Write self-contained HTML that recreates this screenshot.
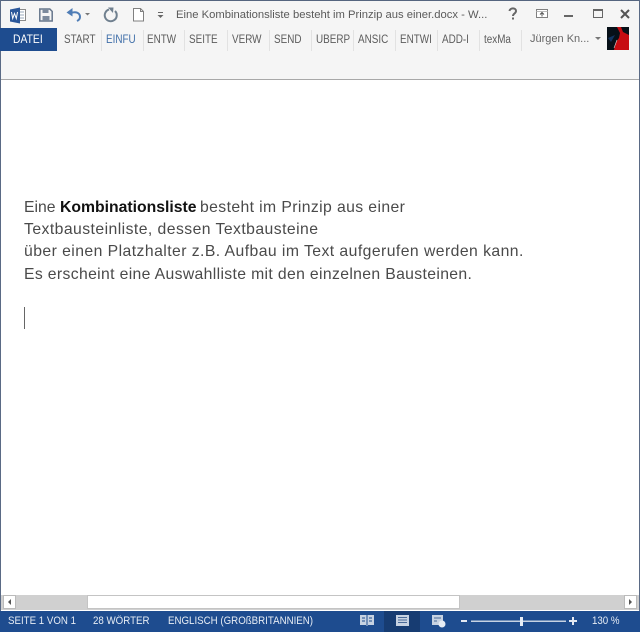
<!DOCTYPE html>
<html lang="de">
<head>
<meta charset="utf-8">
<title>Word</title>
<style>
html,body{margin:0;padding:0;background:#fff}
#p{position:relative;width:640px;height:632px;overflow:hidden;background:#fff;font-family:"Liberation Sans",sans-serif;color:#555}
.t{position:absolute;white-space:nowrap;line-height:14px}
.r{position:absolute}
.tab{font-size:11.5px;top:33px;color:#5c5c5c;transform:scaleX(.86);transform-origin:0 50%}
.sep{position:absolute;top:30px;width:1px;height:21px;background:#e2e2e2}
.doc{position:absolute;left:24px;font-size:15.75px;line-height:22px;color:#4a4a4a;white-space:nowrap;font-family:"Liberation Sans",sans-serif}
.st{font-size:10.8px;color:#e6ecf4;top:614px;transform:scaleX(.9);transform-origin:0 50%}
</style>
</head>
<body>
<div id="p">
  <div class="r" style="left:0;top:0;width:640px;height:80px;background:#f5f5f5"></div>
  <div class="r" style="left:0;top:0;width:640px;height:1px;background:#55657f"></div>
  <div class="r" style="left:0;top:79px;width:640px;height:1px;background:#a8a8a8"></div>
  <div class="r" style="left:0;top:0;width:1px;height:632px;background:#5a6a85"></div>
  <div class="r" style="right:0;top:0;width:1px;height:632px;background:#5a6a85"></div>

  <svg class="r" style="left:0;top:0" width="640" height="30" viewBox="0 0 640 30">
    <rect x="16.500" y="9.500" width="9" height="11" fill="#fff" stroke="#8a8a8a"/>
    <path d="M18 12h6M18 15h6M18 18h6" stroke="#9ab"/>
    <path d="M10 9.500l10-2v16l-10-2z" fill="#2b579a"/>
    <path d="M11.500 12l1.200 6.500 1.800-5 1.800 5 1.200-6.500" fill="none" stroke="#fff" stroke-width="1"/>
    <path d="M39.800 9h10l2.400 2.400V21h-12.400z" fill="#f5f5f5" stroke="#66768c" stroke-width="1.500"/>
    <rect x="42.500" y="9" width="6" height="4" fill="#7c8a9c"/>
    <rect x="42.500" y="16" width="7" height="5" fill="#7c8a9c"/>
    <path d="M71 13c5-2 9 0 9 4 0 2-1 3-3 4" fill="none" stroke="#4f7db6" stroke-width="2"/>
    <path d="M66.500 12.500l6-4.500v8.500z" fill="#4f7db6"/>
    <path d="M85 13h5l-2.500 2.500z" fill="#777"/>
    <path d="M109 9.500a6 6 0 1 0 6 1.500" fill="none" stroke="#70808f" stroke-width="2"/>
    <path d="M108 7.500h5.500l-.5 5.500z" fill="#70808f"/>
    <path d="M133.500 8.500h7l3 3v9.500h-10z" fill="#fff" stroke="#808080"/>
    <path d="M140.500 8.500v3h3" fill="none" stroke="#808080"/>
    <path d="M158 12.500h5" stroke="#666"/>
    <path d="M157.500 15h6l-3 3z" fill="#666"/>
    <path d="M509.500 11c.5-3.500 6.500-3.500 6.500 0 0 2.500-3 2.500-3 5" fill="none" stroke="#666" stroke-width="2"/>
    <rect x="512" y="17.500" width="2" height="2" fill="#666"/>
    <rect x="536.500" y="9.500" width="11" height="8" fill="#fff" stroke="#808080"/>
    <path d="M536.500 11.500h11" stroke="#bbb"/>
    <path d="M542 16.500v-4M540 14.500l2-2 2 2" fill="none" stroke="#555"/>
    <rect x="564" y="15" width="9" height="2" fill="#666"/>
    <rect x="593.500" y="9.500" width="9" height="8" fill="none" stroke="#666"/>
    <rect x="593" y="9" width="10" height="2" fill="#666"/>
    <path d="M621 10l8 8M629 10l-8 8" stroke="#555" stroke-width="2"/>
  </svg>

  <div class="t" style="left:176px;top:8px;font-size:11.25px;color:#5a5a5a">Eine Kombinationsliste besteht im Prinzip aus einer.docx - W...</div>

  <div class="r" style="left:0;top:28px;width:57px;height:23px;background:#1e4c8f"></div>
  <div class="t" style="left:13px;top:33px;font-size:11.5px;color:#fff;transform:scaleX(.9);transform-origin:0 50%">DATEI</div>

  <div class="t tab" style="left:64px">START</div>
  <div class="t tab" style="left:106px;color:#3f6ea8">EINFÜ</div>
  <div class="t tab" style="left:147px">ENTW</div>
  <div class="t tab" style="left:189px">SEITE</div>
  <div class="t tab" style="left:232px">VERW</div>
  <div class="t tab" style="left:274px">SEND</div>
  <div class="t tab" style="left:316px">ÜBERP</div>
  <div class="t tab" style="left:358px">ANSIC</div>
  <div class="t tab" style="left:400px">ENTWI</div>
  <div class="t tab" style="left:442px">ADD-I</div>
  <div class="t tab" style="left:484px">texMa</div>
  <div class="t" style="left:530px;top:32px;font-size:11px;color:#666">Jürgen Kn...</div>
  <svg class="r" style="left:595px;top:37px" width="8" height="5"><path d="M0 0h6l-3 3z" fill="#777"/></svg>

  <div class="sep" style="left:101px"></div><div class="sep" style="left:143px"></div><div class="sep" style="left:184px"></div><div class="sep" style="left:227px"></div><div class="sep" style="left:269px"></div><div class="sep" style="left:311px"></div><div class="sep" style="left:353px"></div><div class="sep" style="left:395px"></div><div class="sep" style="left:437px"></div><div class="sep" style="left:479px"></div><div class="sep" style="left:521px"></div>

  <svg class="r" style="left:607px;top:27px" width="22" height="23" viewBox="0 0 22 23">
    <rect width="22" height="23" fill="#071018"/>
    <path d="M10 0h4l2 5 6 3v15H7l2-8 3-4 1-5z" fill="#c70d12"/>
    <path d="M1 11l7-3-4 7z" fill="#12345f"/>
    <path d="M10 13l-3 8" stroke="#ddd" stroke-width=".6"/>
  </svg>

  <div class="doc" style="top:197px">Eine</div>
  <div class="doc" style="top:197px;left:60px"><b style="color:#111">Kombinationsliste</b></div>
  <div class="doc" style="top:197px;left:200px;letter-spacing:.39px">besteht im Prinzip aus einer</div>
  <div class="doc" style="top:219px;letter-spacing:.44px">Textbausteinliste, dessen Textbausteine</div>
  <div class="doc" style="top:241px;letter-spacing:.44px">über einen Platzhalter z.B. Aufbau im Text aufgerufen werden kann.</div>
  <div class="doc" style="top:264px;letter-spacing:.35px">Es erscheint eine Auswahlliste mit den einzelnen Bausteinen.</div>
  <div class="r" style="left:24px;top:307px;width:1px;height:22px;background:#666"></div>

  <div class="r" style="left:1px;top:595px;width:638px;height:15px;background:#d0d0d0"></div>
  <div class="r" style="left:87px;top:595px;width:373px;height:14px;background:#fff;border:1px solid #c4c4c4;box-sizing:border-box"></div>
  <div class="r" style="left:3px;top:595px;width:13px;height:14px;background:#fff;border:1px solid #bbb;box-sizing:border-box"></div>
  <div class="r" style="left:624px;top:595px;width:13px;height:14px;background:#fff;border:1px solid #bbb;box-sizing:border-box"></div>
  <svg class="r" style="left:3px;top:595px" width="13" height="14"><path d="M8 4v6L5 7z" fill="#555"/></svg>
  <svg class="r" style="left:624px;top:595px" width="13" height="14"><path d="M5 4v6l3-3z" fill="#555"/></svg>

  <div class="r" style="left:0;top:611px;width:640px;height:21px;background:#1e4c8f"></div>
  <div class="t st" style="left:8px">SEITE 1 VON 1</div>
  <div class="t st" style="left:93px">28 WÖRTER</div>
  <div class="t st" style="left:168px">ENGLISCH (GROßBRITANNIEN)</div>

  <div class="r" style="left:384px;top:611px;width:36px;height:21px;background:#173c72"></div>
  <svg class="r" style="left:350px;top:611px" width="290" height="21" viewBox="0 0 290 21">
    <path d="M10 4h6l1 1 1-1h6v10h-6l-1 1-1-1h-6z" fill="#c7d2e2"/>
    <path d="M17 5v9M12 7h3M12 10h3M19 7h3M19 10h3" stroke="#1e4c8f"/>
    <rect x="46" y="4" width="13" height="11" fill="#c7d2e2"/>
    <path d="M48 6.500h9M48 9h9M48 11.500h9" stroke="#4a6a98"/>
    <rect x="82" y="4" width="11" height="10" fill="#c7d2e2"/>
    <path d="M84 7h7M84 10h3" stroke="#4a6a98"/>
    <circle cx="92" cy="13" r="3.500" fill="#e6ecf4"/>
    <rect x="111" y="9" width="6" height="2" fill="#e4e9f2"/>
    <rect x="121" y="9.500" width="95" height="1.500" fill="#c7d2e2"/>
    <rect x="170" y="6" width="3" height="9" fill="#e8edf5"/>
    <rect x="219" y="9" width="8" height="2" fill="#e4e9f2"/>
    <rect x="222" y="6" width="2" height="8" fill="#e4e9f2"/>
  </svg>
  <div class="t st" style="left:592px">130 %</div>
</div>
</body>
</html>
